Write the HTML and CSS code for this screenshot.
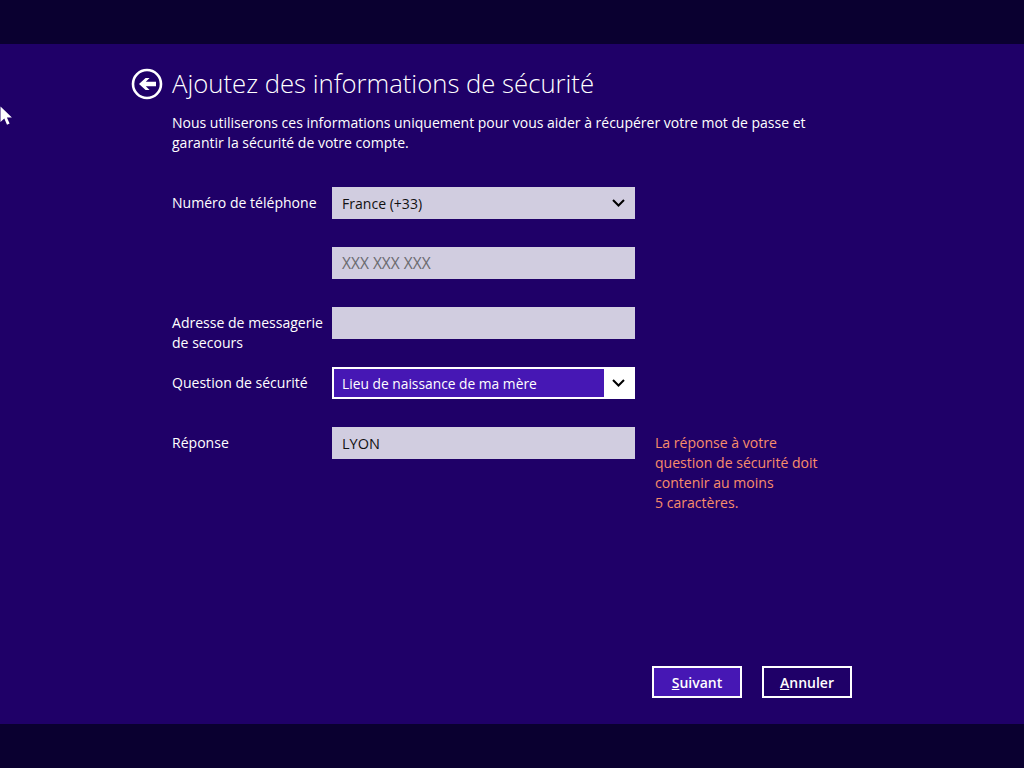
FILE: index.html
```html
<!DOCTYPE html>
<html lang="fr">
<head>
<meta charset="utf-8">
<title>Ajoutez des informations de sécurité</title>
<link rel="stylesheet" href="styles.css">
</head>
<body>
<div class="screen">
  <div class="bar"></div>
  <main class="main">
    <header class="head">
      <svg class="back" width="32" height="32" viewBox="0 0 32 32" aria-hidden="true">
        <circle cx="16" cy="16" r="14" fill="none" stroke="#fff" stroke-width="2.600"/>
        <path d="M25 13.800H14.800l3.800-3.800h-4L8 16l6.600 6h4l-3.800-3.800H25z" fill="#fff"/>
      </svg>
      <h1 class="title">Ajoutez des informations de sécurité</h1>
    </header>
    <p class="intro">Nous utiliserons ces informations uniquement pour vous aider à récupérer votre mot de passe et<br>garantir la sécurité de votre compte.</p>
    <form class="form">
      <div class="label">Numéro de téléphone</div>
      <div class="field"><span>France (+33)</span>
        <svg class="chev" width="13" height="8" viewBox="0 0 13 8" aria-hidden="true"><path d="M1 1l5.500 5.500L12 1" fill="none" stroke="#000" stroke-width="2"/></svg>
      </div>

      <div class="label"></div>
      <div class="field placeholder"><span>XXX XXX XXX</span></div>

      <div class="label">Adresse de messagerie<br>de secours</div>
      <div class="field"></div>

      <div class="label">Question de sécurité</div>
      <div class="field focused"><span class="selected">Lieu de naissance de ma mère</span>
        <span class="chevbox"><svg width="13" height="8" viewBox="0 0 13 8" aria-hidden="true"><path d="M1 1l5.500 5.500L12 1" fill="none" stroke="#000" stroke-width="2"/></svg></span>
      </div>

      <div class="label">Réponse</div>
      <div class="field"><span class="answer">LYON</span></div>
      <div class="hint">La réponse à votre<br>question de sécurité doit<br>contenir au moins<br>5 caractères.</div>
    </form>
    <div class="actions">
      <button type="button" class="btn primary"><u>S</u>uivant</button>
      <button type="button" class="btn"><u>A</u>nnuler</button>
    </div>
  </main>
  <div class="bar"></div>
  <svg class="cursor" width="13" height="20" viewBox="0 0 13 20" aria-hidden="true"><path d="M0.500 0.500V16l3.800-3.600 2.700 6.300 2.600-1.100-2.700-6.100h5z" fill="#fff"/></svg>
</div>
</body>
</html>
```
FILE: styles.css
```css
* { box-sizing: border-box; }
html, body { margin: 0; padding: 0; }
body {
  font-family: "Open Sans", "Noto Sans", "Liberation Sans", sans-serif;
  color: #fff;
  background: #1f0068;
}
.screen {
  position: relative;
  width: 1024px;
  height: 768px;
  display: flex;
  flex-direction: column;
  overflow: hidden;
}
.bar { height: 44px; flex: none; background: #0a0030; }
.main {
  flex: 1;
  display: flex;
  flex-direction: column;
  background: #1f0068;
  padding: 23px 0 26px 131px;
}
.head { display: flex; align-items: center; gap: 9px; height: 34px; }
.back { flex: none; }
.title { margin: 0; font-size: 25.700px; font-weight: 300; line-height: 32px; white-space: nowrap; }
.intro { margin: 12px 0 0 41px; font-size: 14px; line-height: 20px; }
.form {
  margin: 34px 0 0 41px;
  display: grid;
  grid-template-columns: 160px 303px 200px;
  grid-auto-rows: 32px;
  row-gap: 28px;
  font-size: 14.050px;
}
.label { grid-column: 1; line-height: 20px; padding-top: 6px; white-space: nowrap; }
.field {
  grid-column: 2;
  display: flex;
  align-items: center;
  justify-content: space-between;
  background: #d1cde0;
  color: #111;
  padding: 0 10px 0 10px;
}
.placeholder { color: #6b6b70; font-size: 15.500px; }
.answer { font-size: 14.500px; }
.focused {
  background: #fff;
  border: 2px solid #fff;
  padding: 0;
  align-items: stretch;
}
.selected {
  flex: 1;
  background: #4617b4;
  color: #fff;
  padding: 1px 0 0 8px;
  line-height: 27px;
  font-size: 13.800px;
}
.chevbox { flex: none; width: 29px; display: flex; align-items: center; justify-content: center; }
.hint {
  grid-column: 3;
  margin-left: 20px;
  color: #f88d6a;
  line-height: 20px;
  padding-top: 6px;
  white-space: nowrap;
}
.actions {
  margin-top: auto;
  display: flex;
  gap: 20px;
  padding-left: 521px;
}
.btn {
  width: 90px;
  height: 32px;
  border: 2px solid #fff;
  background: transparent;
  color: #fff;
  font: 600 14px "Open Sans", "Noto Sans", sans-serif;
  padding: 0;
}
.primary { background: #4617b4; }
.cursor { position: absolute; left: 0; top: 106px; }
```
